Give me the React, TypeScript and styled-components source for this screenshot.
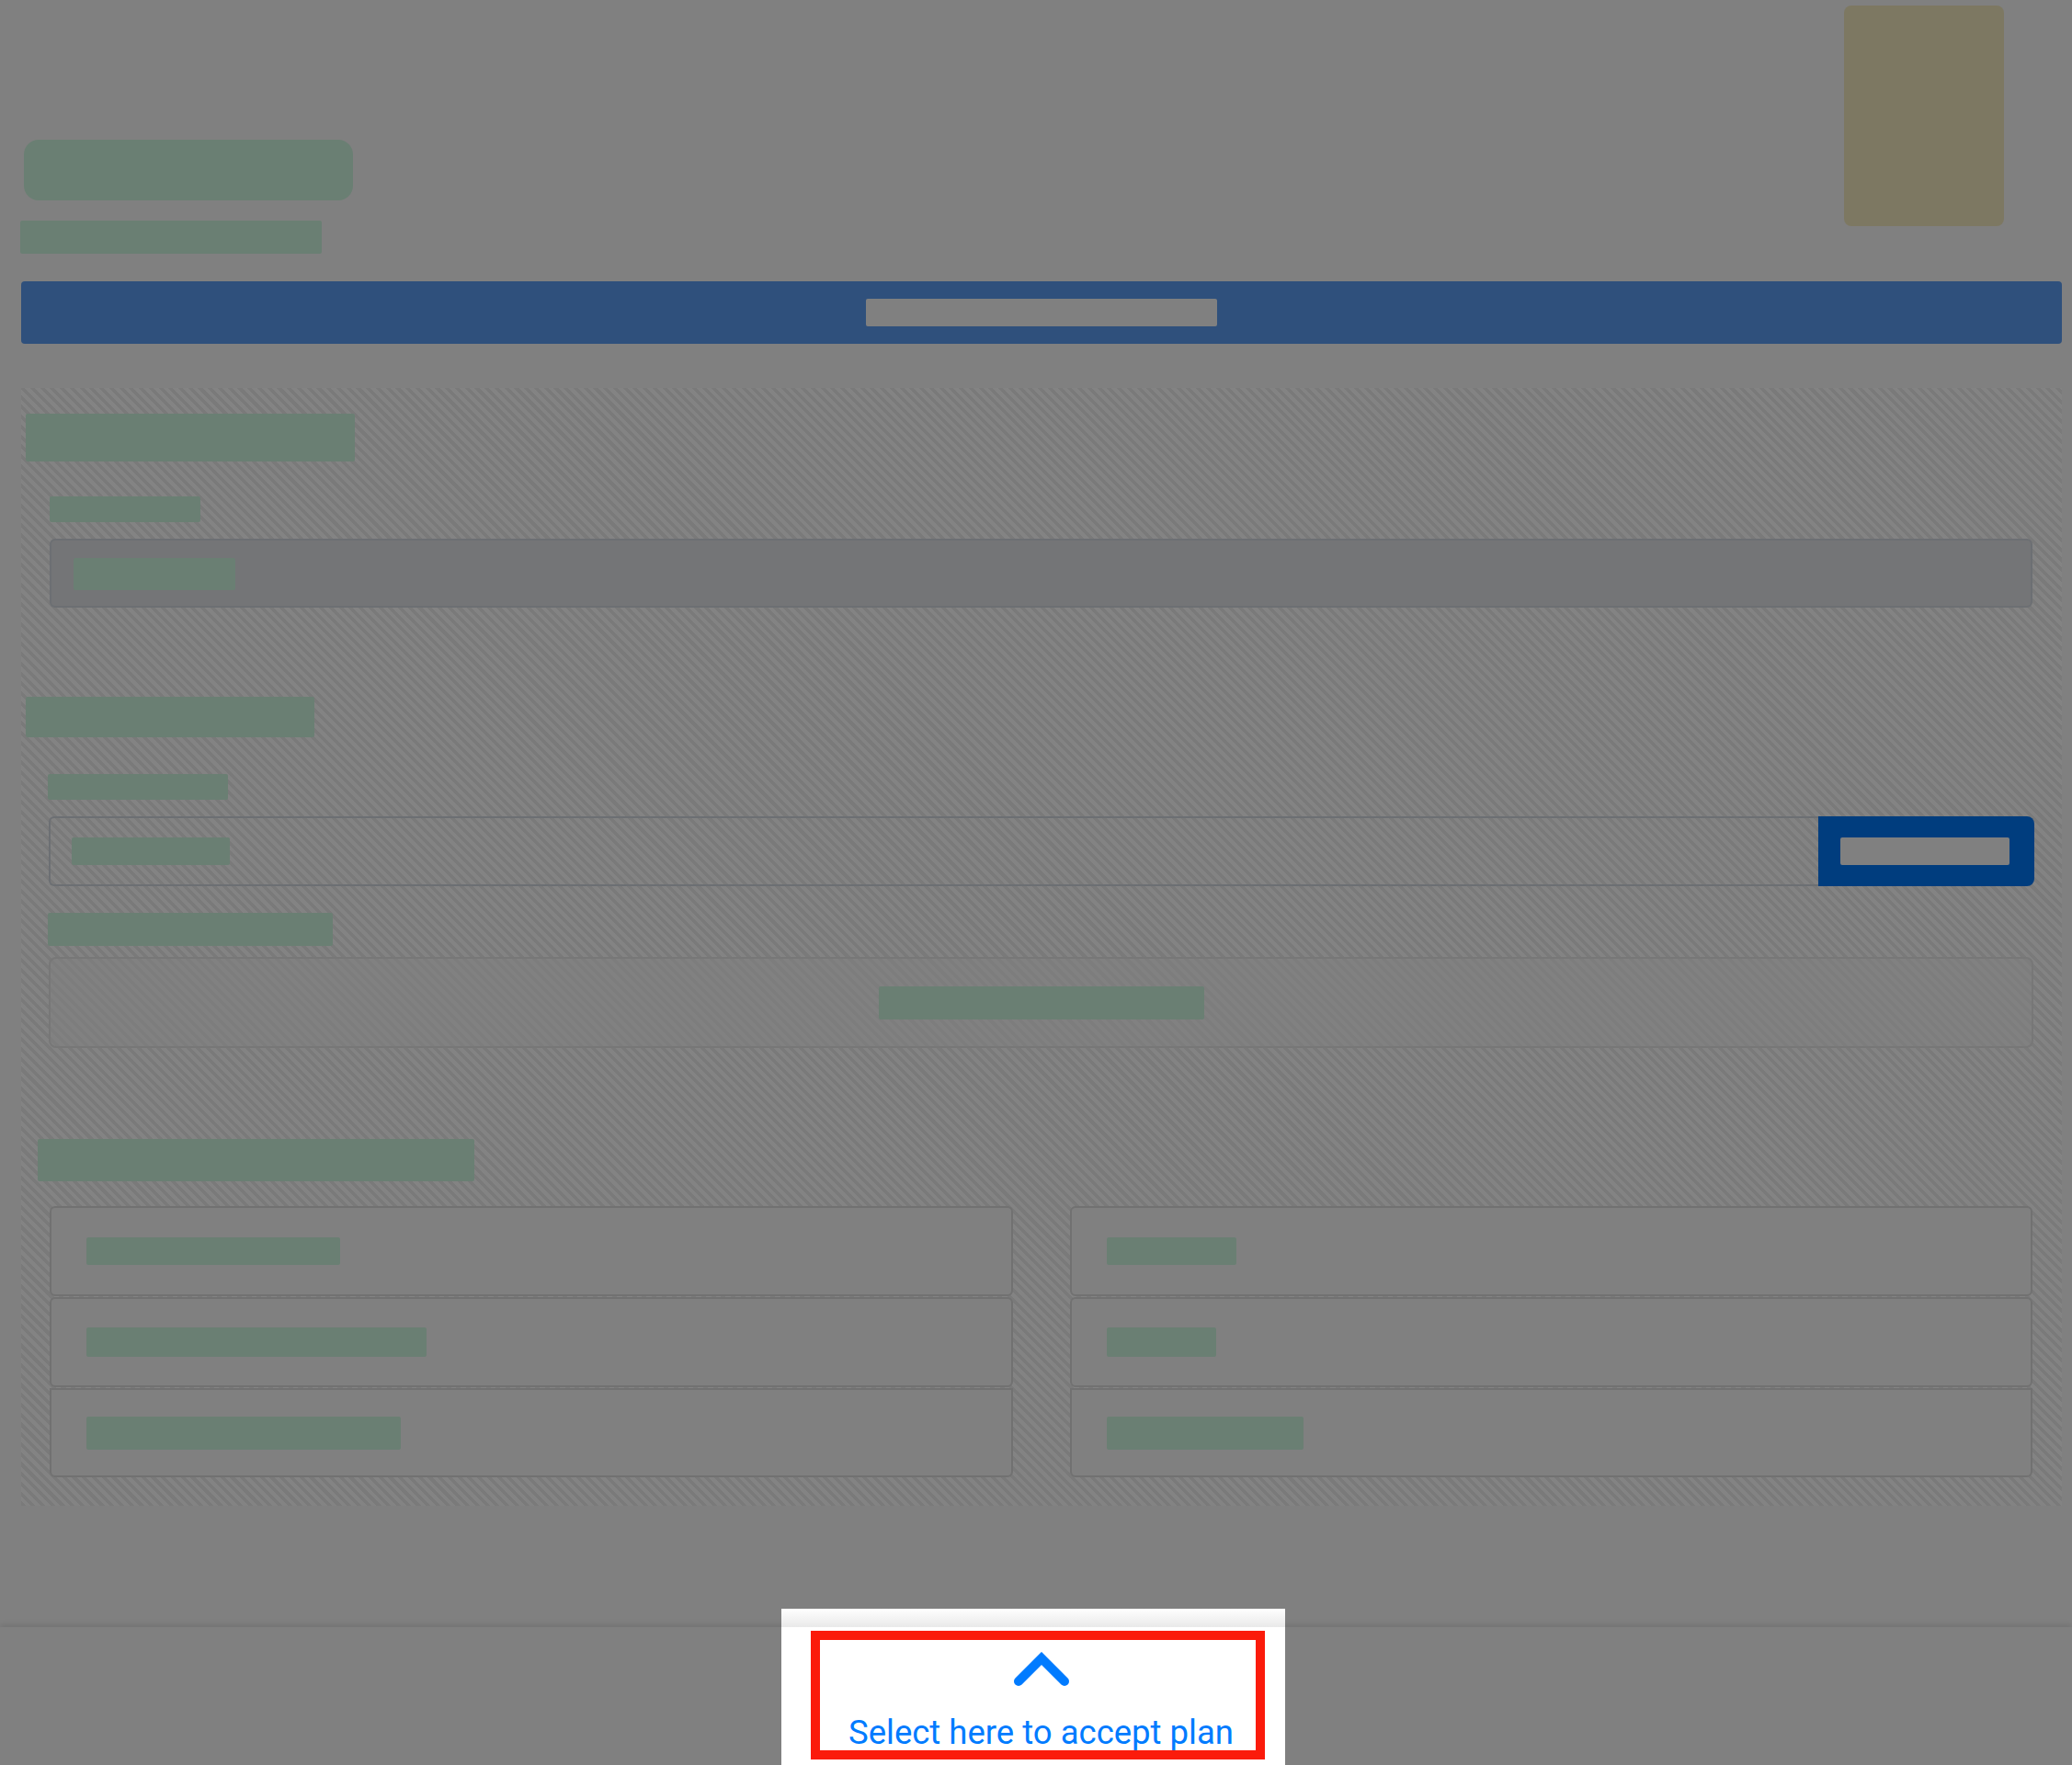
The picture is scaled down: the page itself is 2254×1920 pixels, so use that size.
import React from "react";
import styled, { createGlobalStyle } from "styled-components";

const GlobalStyle = createGlobalStyle`
  html, body {
    margin: 0;
    padding: 0;
    background: #808080;
    font-family: Roboto, "Liberation Sans", Arial, sans-serif;
  }
  * { box-sizing: border-box; }
`;

const Page = styled.div`
  min-height: 1920px;
  display: flex;
  flex-direction: column;
`;

const Main = styled.main`
  padding: 0 11px 0 23px;
  display: flex;
  flex-direction: column;
`;

const Block = styled.div<{ $w: number; $h: number; $r?: number; $ml?: number; $mt?: number }>`
  width: ${(p) => p.$w}px;
  height: ${(p) => p.$h}px;
  flex: none;
  background: #6a7f73;
  border-radius: ${(p) => p.$r ?? 2}px;
  margin-left: ${(p) => p.$ml ?? 0}px;
  margin-top: ${(p) => p.$mt ?? 0}px;
`;

const Header = styled.header`
  height: 306px;
  display: flex;
  justify-content: space-between;
  align-items: flex-start;
`;

const Brand = styled.div`
  display: flex;
  flex-direction: column;
  gap: 22px;
  padding-top: 152px;
`;

const Avatar = styled.div`
  width: 174px;
  height: 240px;
  margin: 6px 63px 0 0;
  border-radius: 8px;
  background: #7d7862;
`;

const Banner = styled.div`
  height: 68px;
  border-radius: 4px;
  background: #2f507c;
  display: flex;
  align-items: center;
  justify-content: center;
`;

const BannerText = styled.div`
  width: 382px;
  height: 30px;
  border-radius: 2px;
  background: #808080;
`;

const Hatch = styled.section`
  margin-top: 48px;
  padding: 28px 32px 31px 5px;
  display: flex;
  flex-direction: column;
  background: repeating-linear-gradient(
    45deg,
    #7a7a7a 0px,
    #7a7a7a 3.6px,
    #838383 3.6px,
    #838383 7.6px
  );
`;

const Field = styled.div`
  margin-left: 26px;
  display: flex;
  flex-direction: column;
`;

const TextField = styled.div<{ $filled?: boolean }>`
  height: 75px;
  margin-top: 18px;
  border: 2px solid #6c6f73;
  border-radius: 6px;
  background: ${(p) => (p.$filled ? "#747577" : "transparent")};
  display: flex;
  align-items: center;
  padding-left: 24px;
`;

const InputGroup = styled.div`
  height: 76px;
  margin: 18px -2px 0 -1px;
  display: flex;
`;

const GroupInput = styled.div`
  flex: 1;
  border: 2px solid #6c6f73;
  border-right: none;
  border-radius: 6px 0 0 6px;
  display: flex;
  align-items: center;
  padding-left: 23px;
`;

const GroupButton = styled.div`
  width: 235px;
  background: #003d7e;
  border-radius: 0 8px 8px 0;
  display: flex;
  align-items: center;
  padding-left: 24px;
`;

const ButtonLabel = styled.div`
  width: 184px;
  height: 30px;
  border-radius: 2px;
  background: #808080;
`;

const Dropzone = styled.div`
  height: 99px;
  margin: 12px -1px 0 -1px;
  border: 2px solid #777777;
  border-radius: 8px;
  background: rgba(128, 128, 128, 0.55);
  display: flex;
  align-items: center;
  justify-content: center;
`;

const Grid = styled.div`
  margin: 27px 0 0 26px;
  display: grid;
  grid-template-columns: 1fr 1fr;
  column-gap: 62px;
`;

const Column = styled.div`
  display: flex;
  flex-direction: column;
  gap: 1px;
`;

const Row = styled.div<{ $last?: boolean }>`
  height: ${(p) => (p.$last ? 97 : 98)}px;
  border: 2px solid #717171;
  border-radius: ${(p) => (p.$last ? "0 0 6px 6px" : "6px")};
  background: #808080;
  display: flex;
  align-items: center;
  padding-left: 38px;
`;

const Footer = styled.footer`
  margin-top: auto;
  height: 150px;
  background: #808080;
  box-shadow: 0 -3px 6px rgba(0, 0, 0, 0.1);
  display: flex;
  justify-content: center;
  padding-right: 6px;
`;

const Tab = styled.div`
  width: 548px;
  height: 170px;
  margin-top: -20px;
  background: linear-gradient(
    to bottom,
    #ffffff 0px,
    #e9e9e9 20px,
    #ffffff 20px,
    #ffffff 100%
  );
  padding: 24px 0 0 32px;
`;

const AcceptButton = styled.button`
  width: 494px;
  height: 140px;
  border: 10px solid #fb1b0b;
  background: #ffffff;
  overflow: hidden;
  display: flex;
  flex-direction: column;
  align-items: center;
  padding: 13px 0 0 7px;
  margin: 0;
  cursor: pointer;
`;

const Chevron = styled.svg`
  display: block;
  flex: none;
`;

const AcceptText = styled.span`
  margin-top: 29px;
  font-family: Roboto, "Liberation Sans", Arial, sans-serif;
  font-size: 36.5px;
  line-height: 42px;
  color: #007bff;
  white-space: nowrap;
`;

const leftRows = [276, 370, 342];
const rightRows = [141, 119, 214];
const rowHeights = [30, 32, 36];

export default function App() {
  return (
    <Page>
      <GlobalStyle />
      <Main>
        <Header>
          <Brand>
            <Block $w={358} $h={66} $r={16} $ml={3} />
            <Block $w={328} $h={36} $ml={-1} />
          </Brand>
          <Avatar />
        </Header>

        <Banner>
          <BannerText />
        </Banner>

        <Hatch>
          <Block $w={358} $h={52} />
          <Field>
            <Block $w={164} $h={28} $mt={38} />
            <TextField $filled>
              <Block $w={176} $h={35} $mt={2} />
            </TextField>
          </Field>

          <Block $w={314} $h={44} $mt={97} />
          <Field>
            <Block $w={196} $h={28} $mt={40} $ml={-2} />
            <InputGroup>
              <GroupInput>
                <Block $w={172} $h={30} />
              </GroupInput>
              <GroupButton>
                <ButtonLabel />
              </GroupButton>
            </InputGroup>
            <Block $w={310} $h={36} $mt={29} $ml={-2} />
            <Dropzone>
              <Block $w={354} $h={36} />
            </Dropzone>
          </Field>

          <Block $w={475} $h={46} $mt={99} $ml={13} />
          <Grid>
            <Column>
              {leftRows.map((w, i) => (
                <Row key={i} $last={i === 2}>
                  <Block $w={w} $h={rowHeights[i]} />
                </Row>
              ))}
            </Column>
            <Column>
              {rightRows.map((w, i) => (
                <Row key={i} $last={i === 2}>
                  <Block $w={w} $h={rowHeights[i]} />
                </Row>
              ))}
            </Column>
          </Grid>
        </Hatch>
      </Main>

      <Footer>
        <Tab>
          <AcceptButton type="button">
            <Chevron width="62" height="38" viewBox="0 0 62 38">
              <polyline
                points="6,32 31,7 56,32"
                fill="none"
                stroke="#007bff"
                strokeWidth="10"
                strokeLinecap="round"
                strokeLinejoin="miter"
              />
            </Chevron>
            <AcceptText>Select here to accept plan</AcceptText>
          </AcceptButton>
        </Tab>
      </Footer>
    </Page>
  );
}
